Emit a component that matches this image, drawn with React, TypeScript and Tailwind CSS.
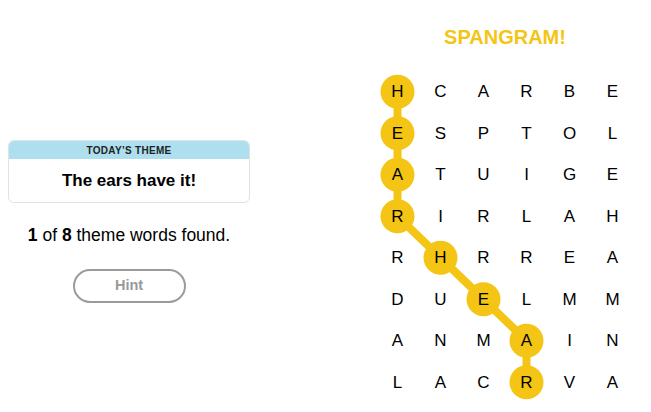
const grid = [
  'HCARBE',
  'ESPTOL',
  'ATUIGE',
  'RIRLAH',
  'RHRREA',
  'DUELMM',
  'ANMAIN',
  'LACRVA',
]

const CW = 43
const CH = 41.5
const spangram: [number, number][] = [
  [0, 0], [0, 1], [0, 2], [0, 3], [1, 4], [2, 5], [3, 6], [3, 7],
]
const cx = (c: number) => CW / 2 + c * CW
const cy = (r: number) => CH / 2 + r * CH

const YELLOW = '#f4c514'

function Board() {
  const points = spangram.map(([c, r]) => `${cx(c)},${cy(r)}`).join(' ')
  return (
    <div className="relative w-[258px] h-[332px]">
      <svg className="absolute inset-0" width={258} height={332}>
        <polyline points={points} fill="none" stroke={YELLOW} strokeWidth={8} strokeLinejoin="round" />
        {spangram.map(([c, r]) => (
          <circle key={`${c}-${r}`} cx={cx(c)} cy={cy(r)} r={17} fill={YELLOW} />
        ))}
      </svg>
      <div className="relative grid grid-cols-6">
        {grid.flatMap((row, r) =>
          row.split('').map((ch, c) => (
            <div key={`${c}-${r}`} className="h-[41.5px] flex items-center justify-center text-[17px] text-black">
              {ch}
            </div>
          )),
        )}
      </div>
    </div>
  )
}

export default function App() {
  return (
    <div className="w-[651px] h-[412px] bg-white flex font-['Liberation_Sans',Arial,sans-serif] overflow-hidden">
      {/* Left panel */}
      <div className="w-[250px] pl-2 pt-[140px] flex flex-col items-center">
        <div className="w-[242px] rounded-md border border-[#e2e2e2] overflow-hidden">
          <div className="h-[18px] bg-[#aedfee] flex items-center justify-center text-[10px] font-bold tracking-[0.3px] text-[#222]">
            TODAY’S THEME
          </div>
          <div className="h-[43px] flex items-center justify-center text-[17px] font-bold text-black">
            The ears have it!
          </div>
        </div>
        <p className="mt-[20px] text-[17.5px] leading-6 text-black">
          <span className="font-bold">1</span> of <span className="font-bold">8</span> theme words found.
        </p>
        <button className="mt-[22px] w-[113px] h-[34px] rounded-full border-2 border-[#9b9b9b] text-[14.5px] font-bold text-[#999]">
          Hint
        </button>
      </div>

      {/* Right panel */}
      <div className="ml-[126px] w-[258px] flex flex-col items-center">
        <div className="mt-[25px] text-[20px] leading-6 font-bold" style={{ color: YELLOW }}>
          SPANGRAM!
        </div>
        <div className="mt-[22px]">
          <Board />
        </div>
      </div>
    </div>
  )
}
